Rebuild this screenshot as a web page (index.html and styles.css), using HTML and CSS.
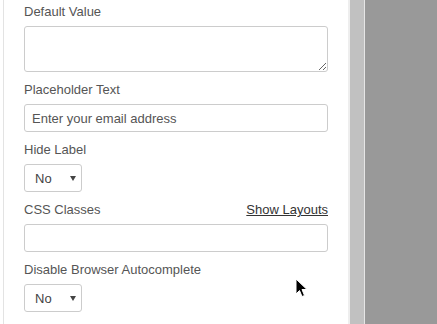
FILE: index.html
```html
<!DOCTYPE html>
<html lang="en">
<head>
    <meta charset="UTF-8">
    <meta name="viewport" content="width=device-width, initial-scale=1.0">
    <title>Field Settings</title>
    <link rel="stylesheet" href="styles.css">
</head>
<body>
    <div class="panel">
        <div class="form-group">
            <label for="defaultValue">Default Value</label>
            <textarea id="defaultValue"></textarea>
        </div>
        <div class="form-group">
            <label for="placeholder">Placeholder Text</label>
            <input type="text" id="placeholder" value="Enter your email address">
        </div>
        <div class="form-group">
            <label for="hideLabel">Hide Label</label>
            <span class="select-wrap">
                <select id="hideLabel">
                    <option>No</option>
                    <option>Yes</option>
                </select>
            </span>
        </div>
        <div class="form-group">
            <div class="label-row">
                <label for="cssClasses">CSS Classes</label>
                <a href="#" class="link">Show Layouts</a>
            </div>
            <input type="text" id="cssClasses">
        </div>
        <div class="form-group">
            <label for="autocomplete">Disable Browser Autocomplete</label>
            <span class="select-wrap">
                <select id="autocomplete">
                    <option>No</option>
                    <option>Yes</option>
                </select>
            </span>
        </div>
    </div>
    <div class="gutter"></div>
    <div class="scroll"></div>
    <div class="edge"></div>
    <div class="backdrop"></div>

    <svg class="cursor" width="13" height="20" viewBox="0 0 13 20">
        <path d="M1 1 L1 16 L4.5 12.5 L7 18.5 L9.5 17.5 L7 11.5 L12 11.5 Z" fill="#000" stroke="#fff" stroke-width="1"/>
    </svg>
</body>
</html>
```

FILE: styles.css
```css
html, body {
    height: 100%;
}
body {
    font-family: "Liberation Sans", Arial, sans-serif;
    font-size: 13px;
    color: #555;
    margin: 0;
    padding: 0;
    display: flex;
    overflow: hidden;
    background-color: #fff;
}
.panel {
    width: 304px;
    margin-left: 3px;
    border-left: 1px solid #e3e3e3;
    padding: 2px 20px 0 20px;
    background-color: #fff;
    flex-shrink: 0;
}
.gutter {
    width: 2px;
    background-color: #eeeeee;
}
.scroll {
    width: 14px;
    background-color: #c1c1c1;
}
.edge {
    width: 1px;
    background-color: #e6e6e6;
}
.backdrop {
    flex: 1;
    background-color: #999999;
}
.form-group {
    margin-bottom: 8px;
}
.form-group label {
    display: block;
    line-height: 18px;
    padding-top: 1px;
    margin-bottom: 5px;
}
.label-row {
    display: flex;
    justify-content: space-between;
    line-height: 18px;
    padding-top: 1px;
    margin-bottom: 5px;
}
.label-row label {
    padding-top: 0;
    margin-bottom: 0;
}
.link {
    color: #333;
    text-decoration: underline;
}
.form-group input, .form-group textarea {
    display: block;
    box-sizing: border-box;
    width: 100%;
    margin: 0;
    border: 1px solid #ccc;
    border-radius: 3px;
    font-family: inherit;
    font-size: 13px;
    color: #555;
    outline: none;
}
.form-group input {
    height: 28px;
    padding: 0 7px;
}
.form-group textarea {
    height: 46px;
    padding: 6px 7px;
}
.select-wrap {
    position: relative;
    display: block;
    width: 58px;
}
.select-wrap select {
    -webkit-appearance: none;
    appearance: none;
    box-sizing: border-box;
    width: 58px;
    height: 28px;
    margin: 0;
    padding: 0 0 0 10px;
    border: 1px solid #ccc;
    border-radius: 3px;
    background-color: #fff;
    font-family: inherit;
    font-size: 13px;
    color: #444;
    outline: none;
}
.select-wrap::after {
    content: "";
    position: absolute;
    left: 46px;
    top: 12px;
    border-left: 3px solid transparent;
    border-right: 3px solid transparent;
    border-top: 5px solid #444;
    pointer-events: none;
}
.cursor {
    position: absolute;
    left: 295px;
    top: 278px;
}
```
